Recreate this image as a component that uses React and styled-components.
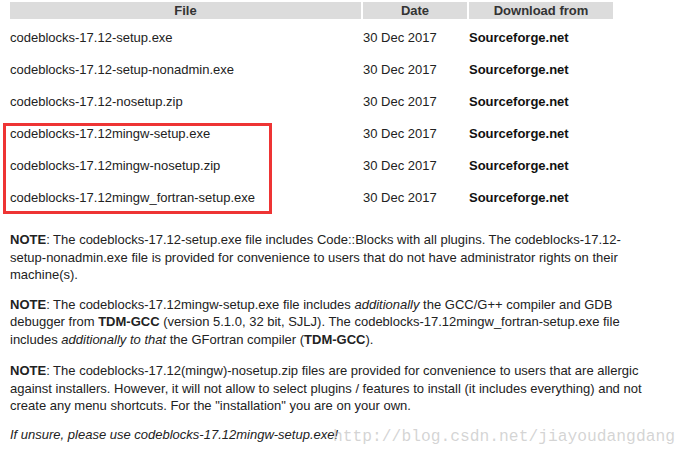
import React from "react";
import styled, { createGlobalStyle } from "styled-components";

const Global = createGlobalStyle`
  html, body { margin: 0; padding: 0; background: #fff; }
  body { font-family: "Liberation Sans", Arial, sans-serif; color: #222; font-size: 13px; }
`;

const Page = styled.div`
  position: relative;
  width: 689px;
  height: 455px;
  overflow: hidden;
  padding: 0 8px;
  box-sizing: border-box;
`;

const Table = styled.table`
  border-spacing: 2px;
  border-collapse: separate;
  width: 605px;
  table-layout: fixed;
  font-size: 13px;
`;

const Th = styled.th`
  background: #dcdcdc;
  font-weight: bold;
  color: #333;
  height: 17px;
  padding: 0;
  text-align: center;
  font-size: 13px;
  line-height: 17px;
  width: ${(p) => p.$w}px;
`;

const Td = styled.td`
  height: 28px;
  padding: 2px 0 0 0;
  vertical-align: middle;
  font-weight: ${(p) => (p.$bold ? "bold" : "normal")};
  color: ${(p) => (p.$bold ? "#111" : "#222")};
`;

const Notes = styled.div`
  width: 645px;
  padding-left: 2px;
  margin-top: 18px;
`;

const Para = styled.p`
  margin: 0 0 ${(p) => p.$gap}px 0;
  line-height: 17.5px;
  font-size: 13px;
  font-style: ${(p) => (p.$italic ? "italic" : "normal")};
`;

const Highlight = styled.div`
  position: absolute;
  left: 3px;
  top: 123px;
  width: 269px;
  height: 91px;
  border: 3px solid #ee3434;
  box-sizing: border-box;
  pointer-events: none;
`;

const Watermark = styled.div`
  position: absolute;
  left: 333px;
  top: 427px;
  font-family: "Liberation Mono", "Courier New", monospace;
  font-size: 16.3px;
  color: rgba(170, 170, 170, 0.5);
  white-space: nowrap;
  pointer-events: none;
`;

const rows = [
  "codeblocks-17.12-setup.exe",
  "codeblocks-17.12-setup-nonadmin.exe",
  "codeblocks-17.12-nosetup.zip",
  "codeblocks-17.12mingw-setup.exe",
  "codeblocks-17.12mingw-nosetup.zip",
  "codeblocks-17.12mingw_fortran-setup.exe",
];

export default function App() {
  return (
    <>
      <Global />
      <Page>
        <Table>
          <thead>
            <tr>
              <Th $w={351}>File</Th>
              <Th $w={104}>Date</Th>
              <Th $w={144}>Download from</Th>
            </tr>
          </thead>
          <tbody>
            {rows.map((r) => (
              <tr key={r}>
                <Td>{r}</Td>
                <Td>30 Dec 2017</Td>
                <Td $bold>Sourceforge.net</Td>
              </tr>
            ))}
          </tbody>
        </Table>
        <Notes>
          <Para $gap={12}>
            <b>NOTE</b>: The codeblocks-17.12-setup.exe file includes Code::Blocks with all plugins. The codeblocks-17.12-setup-nonadmin.exe file is provided for convenience to users that do not have administrator rights on their machine(s).
          </Para>
          <Para $gap={14}>
            <b>NOTE</b>: The codeblocks-17.12mingw-setup.exe file includes <i>additionally</i> the GCC/G++ compiler and GDB debugger from <b>TDM-GCC</b> (version 5.1.0, 32 bit, SJLJ). The codeblocks-17.12mingw_fortran-setup.exe file includes <i>additionally to that</i> the GFortran compiler (<b>TDM-GCC</b>).
          </Para>
          <Para $gap={11}>
            <b>NOTE</b>: The codeblocks-17.12(mingw)-nosetup.zip files are provided for convenience to users that are allergic against installers. However, it will not allow to select plugins / features to install (it includes everything) and not create any menu shortcuts. For the "installation" you are on your own.
          </Para>
          <Para $gap={0} $italic>If unsure, please use codeblocks-17.12mingw-setup.exe!</Para>
        </Notes>
        <Highlight />
        <Watermark>http://blog.csdn.net/jiayoudangdang</Watermark>
      </Page>
    </>
  );
}
